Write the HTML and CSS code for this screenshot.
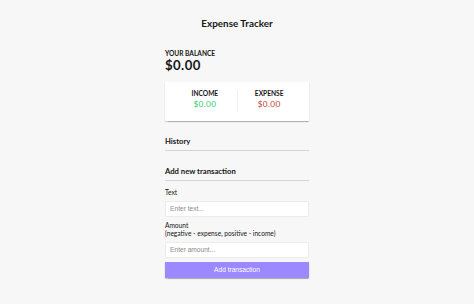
FILE: index.html
```html
<!DOCTYPE html>
<html lang="en">
<head>
<meta charset="UTF-8">
<title>Expense Tracker</title>
<link rel="stylesheet" href="styles.css">
</head>
<body>
  <h2 class="title">Expense Tracker</h2>
  <div class="container">
    <h4 class="label-up">Your Balance</h4>
    <h1 class="balance">$0.00</h1>

    <div class="inc-exp">
      <div class="inc-exp-col first">
        <h4 class="label-up">Income</h4>
        <p class="money plus">$0.00</p>
      </div>
      <div class="inc-exp-col">
        <h4 class="label-up">Expense</h4>
        <p class="money minus">$0.00</p>
      </div>
    </div>

    <h3 class="section">History</h3>
    <ul class="list"></ul>

    <h3 class="section">Add new transaction</h3>
    <form class="form">
      <div class="form-control">
        <label class="field-label" for="text">Text</label>
        <input class="field" type="text" id="text" placeholder="Enter text...">
      </div>
      <div class="form-control">
        <label class="field-label" for="amount">Amount<br>(negative - expense, positive - income)</label>
        <input class="field" type="text" id="amount" placeholder="Enter amount...">
      </div>
      <button class="btn" type="button">Add transaction</button>
    </form>
  </div>
</body>
</html>
```

FILE: styles.css
```css
* {
  box-sizing: border-box;
}

body {
  margin: 0;
  background-color: #f7f7f7;
  font-family: "Lato", "Liberation Sans", sans-serif;
  color: #161616;
  display: flex;
  flex-direction: column;
  align-items: center;
}

.title {
  margin: 18.1px 0 0;
  font-size: 9.9px;
  line-height: 11.8px;
  font-weight: 700;
}

.container {
  width: 144px;
  margin-top: 20.5px;
}

.label-up {
  margin: 0;
  font-size: 6.6px;
  line-height: 7.9px;
  font-weight: 700;
  text-transform: uppercase;
}

.balance {
  margin: 0;
  font-size: 13.2px;
  line-height: 15.8px;
  font-weight: 700;
  letter-spacing: 0.4px;
}

.inc-exp {
  background-color: #fff;
  box-shadow: 0 0.5px 1.3px rgba(0, 0, 0, 0.12), 0 0.5px 0.9px rgba(0, 0, 0, 0.22);
  padding: 8.2px;
  display: flex;
  margin: 8.2px 0;
}

.inc-exp-col {
  flex: 1;
  text-align: center;
}

.inc-exp-col.first {
  border-right: 1px solid #efefef;
}

.money {
  font-size: 8.2px;
  line-height: 9.9px;
  letter-spacing: 0.4px;
  margin: 2.05px 0;
}

.money.plus {
  color: #2ecc71;
}

.money.minus {
  color: #c0392b;
}

.section {
  font-size: 7.7px;
  line-height: 9.2px;
  font-weight: 700;
  margin: 16.4px 0 3.8px;
  padding-bottom: 3.6px;
  border-bottom: 1px solid #d4d4d4;
}

.list {
  list-style-type: none;
  padding: 0;
  margin: 0 0 16.4px;
}

.form {
  margin: 0;
}

.form-control {
  display: flex;
  flex-direction: column;
}

.form-control + .form-control {
  margin-top: 0.8px;
}

.field-label {
  margin: 4px 0 4.2px;
  font-size: 6.6px;
  line-height: 7.9px;
}

.field {
  display: block;
  width: 100%;
  height: 16.2px;
  border: 1px solid #ececec;
  border-radius: 1px;
  background: #fff;
  font-family: "Liberation Sans", Arial, sans-serif;
  font-size: 6.6px;
  padding: 0 4.1px;
  outline: none;
}

.field::placeholder {
  color: #8a8a8a;
}

.btn {
  display: block;
  width: 100%;
  height: 15.8px;
  margin: 4px 0 12px;
  padding: 0;
  border: 0;
  background-color: #9c88ff;
  color: #fff;
  font-family: "Liberation Sans", Arial, sans-serif;
  font-size: 6.6px;
  box-shadow: 0 0.5px 1.3px rgba(0, 0, 0, 0.12), 0 0.5px 0.9px rgba(0, 0, 0, 0.22);
  cursor: pointer;
}
```
